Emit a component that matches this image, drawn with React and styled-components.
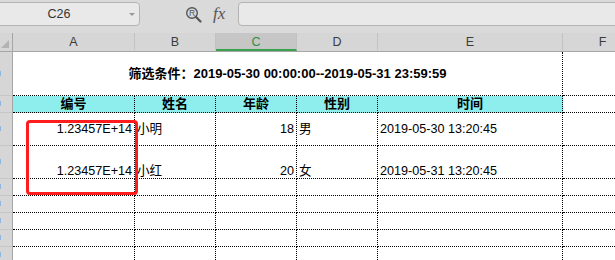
import styled, { createGlobalStyle } from 'styled-components';

const COLS = '13px 122px 81px 81px 81px 185px 80px';
const FONT = '"Liberation Sans", "Noto Sans CJK SC", Arial, sans-serif';

const GlobalStyle = createGlobalStyle`
  html, body {
    margin: 0;
    padding: 0;
    background: #ffffff;
    overflow: hidden;
  }
  body {
    font-family: ${FONT};
  }
`;

const Window = styled.div`
  width: 615px;
  height: 260px;
  overflow: hidden;
  background: #ffffff;
`;

const Toolbar = styled.div`
  display: flex;
  align-items: flex-start;
  height: 33px;
  padding-top: 2px;
  box-sizing: border-box;
  background: #dadada;
`;

const NameBox = styled.div`
  position: relative;
  display: flex;
  align-items: center;
  justify-content: center;
  width: 148px;
  height: 24px;
  margin-left: -8px;
  padding-right: 14px;
  box-sizing: border-box;
  background: #e9e9e9;
  border: 1px solid #b4b4b4;
  border-radius: 4px;
  font-size: 12.5px;
  color: #333333;
`;

const DropArrow = styled.span`
  position: absolute;
  right: 4px;
  top: 10px;
  width: 0;
  height: 0;
  border-left: 3px solid transparent;
  border-right: 3px solid transparent;
  border-top: 3px solid #9a9a9a;
`;

const ZoomIcon = styled.svg`
  margin: 4px 0 0 46px;
  flex: none;
`;

const Fx = styled.span`
  margin: 3px 0 0 9px;
  width: 22px;
  font-family: "Liberation Serif", serif;
  font-style: italic;
  font-size: 17px;
  color: #555555;
  line-height: 18px;
`;

const FormulaBox = styled.div`
  flex: 1;
  height: 24px;
  margin-left: 3px;
  margin-right: -10px;
  box-sizing: border-box;
  background: #e9e9e9;
  border: 1px solid #b4b4b4;
  border-radius: 4px;
`;

const ColHeader = styled.div`
  display: grid;
  grid-template-columns: ${COLS};
  height: 18px;
  background: #d6d6d6;
  border-bottom: 1px solid #a6a6a6;
  box-sizing: content-box;
`;

const Corner = styled.div`
  position: relative;
  border-right: 1px solid #a6a6a6;
  &::after {
    content: '';
    position: absolute;
    right: 3px;
    bottom: 3px;
    width: 0;
    height: 0;
    border-left: 8px solid transparent;
    border-bottom: 8px solid #b3b3b3;
  }
`;

const ColLabel = styled.div`
  display: flex;
  align-items: center;
  justify-content: center;
  box-sizing: border-box;
  font-size: 12.5px;
  color: ${({ $active }) => ($active ? '#2f8f45' : '#3c3c3c')};
  background: ${({ $active }) => ($active ? '#c6c6c6' : 'transparent')};
  border-right: 1px solid #c2c2c2;
  border-bottom: 2px solid ${({ $active }) => ($active ? '#3aa14f' : 'transparent')};
  padding-top: 2px;
`;

const Sheet = styled.div`
  position: relative;
`;

const Row = styled.div`
  display: grid;
  grid-template-columns: ${COLS};
  height: ${({ $h }) => $h}px;
`;

const RowHead = styled.div`
  position: relative;
  background: #d6d6d6;
  border-right: 1px solid #a6a6a6;
  border-bottom: 1px solid #c6c6c6;
  &::before {
    content: '';
    position: absolute;
    left: 0;
    top: 50%;
    width: 1px;
    height: 5px;
    margin-top: -3px;
    background: #8fb6dd;
  }
`;

const Cell = styled.div`
  display: flex;
  align-items: ${({ $valign }) => ($valign === 'end' ? 'flex-end' : 'center')};
  justify-content: ${({ $align }) =>
    $align === 'right' ? 'flex-end' : $align === 'center' ? 'center' : 'flex-start'};
  grid-column: ${({ $span }) => ($span ? `span ${$span}` : 'auto')};
  padding: 0 2px;
  box-sizing: border-box;
  background: ${({ $fill }) => $fill || 'transparent'};
  border-right: 1px dotted #000000;
  border-bottom: 1px dotted #000000;
  font-size: ${({ $bold }) => ($bold ? '13px' : '12.6px')};
  font-weight: ${({ $bold }) => ($bold ? 700 : 400)};
  line-height: 14px;
  color: #000000;
  white-space: nowrap;
`;

const Marker = styled.div`
  position: absolute;
  left: 26px;
  top: 68px;
  width: 112px;
  height: 75px;
  box-sizing: border-box;
  border: 3px solid #ff1c1c;
  border-radius: 4px;
  pointer-events: none;
`;

const CYAN = '#8eeeed';
const letters = ['A', 'B', 'C', 'D', 'E', 'F'];
const headers = ['编号', '姓名', '年龄', '性别', '时间'];
const people = [
  { id: '1.23457E+14', name: '小明', age: '18', sex: '男', time: '2019-05-30 13:20:45', valign: 'center' },
  { id: '1.23457E+14', name: '小红', age: '20', sex: '女', time: '2019-05-31 13:20:45', valign: 'end' },
];

const App = () => {
  return (
    <Window>
      <GlobalStyle />
      <Toolbar>
        <NameBox>
          C26
          <DropArrow />
        </NameBox>
        <ZoomIcon width="18" height="18" viewBox="0 0 18 18">
          <circle cx="6" cy="7" r="5.3" fill="none" stroke="#555" strokeWidth="1.4" />
          <line x1="9.8" y1="10.8" x2="14.5" y2="15.5" stroke="#555" strokeWidth="2.2" strokeLinecap="round" />
          <text x="3" y="10.2" fontSize="8.5" fontFamily="Liberation Sans, sans-serif" fill="#555">R</text>
        </ZoomIcon>
        <Fx>fx</Fx>
        <FormulaBox />
      </Toolbar>

      <ColHeader>
        <Corner />
        {letters.map((l) => (
          <ColLabel key={l} $active={l === 'C'}>{l}</ColLabel>
        ))}
      </ColHeader>

      <Sheet>
        <Row $h={44}>
          <RowHead />
          <Cell $span={5} $align="center" $bold>
            筛选条件：2019-05-30 00:00:00--2019-05-31 23:59:59
          </Cell>
          <Cell />
        </Row>

        <Row $h={17}>
          <RowHead />
          {headers.map((h) => (
            <Cell key={h} $align="center" $fill={CYAN} $bold>{h}</Cell>
          ))}
          <Cell />
        </Row>

        {people.map((p, i) => (
          <Row key={i} $h={33}>
            <RowHead />
            <Cell $align="right" $valign={p.valign}>{p.id}</Cell>
            <Cell $valign={p.valign}>{p.name}</Cell>
            <Cell $align="right" $valign={p.valign}>{p.age}</Cell>
            <Cell $valign={p.valign}>{p.sex}</Cell>
            <Cell $valign={p.valign}>{p.time}</Cell>
            <Cell />
          </Row>
        ))}

        {[5, 6, 7, 8, 9].map((n) => (
          <Row key={n} $h={17}>
            <RowHead />
            <Cell />
            <Cell />
            <Cell />
            <Cell />
            <Cell />
            <Cell />
          </Row>
        ))}

        <Marker />
      </Sheet>
    </Window>
  );
};

export default App;
